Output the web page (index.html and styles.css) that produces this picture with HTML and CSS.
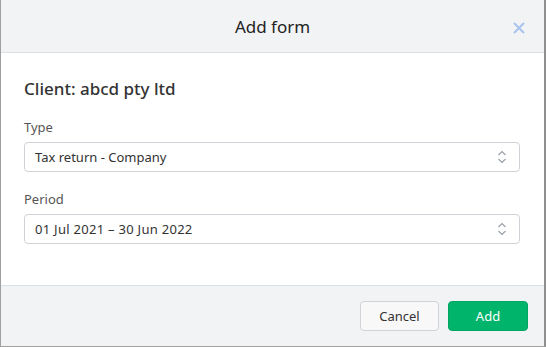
FILE: index.html
```html
<!DOCTYPE html>
<html>
<head>
<meta charset="utf-8">
<link rel="stylesheet" href="styles.css">
</head>
<body>
<div class="dialog">
  <div class="header">
    <div class="title">Add form</div>
    <div class="close">
      <svg width="14" height="14" viewBox="0 0 14 14"><path d="M2 2 L12 12 M12 2 L2 12" stroke="#a8c4ee" stroke-width="2" fill="none"/></svg>
    </div>
  </div>
  <div class="body">
    <div class="client">Client: abcd pty ltd</div>
    <div class="field">
      <div class="label">Type</div>
      <div class="select">
        <span>Tax return - Company</span>
        <svg class="chev" width="10" height="14" viewBox="0 0 10 14"><path d="M1.5 5 L5 1.5 L8.5 5 M1.5 9 L5 12.5 L8.5 9" stroke="#9aa0a8" stroke-width="1.2" fill="none"/></svg>
      </div>
    </div>
    <div class="field">
      <div class="label">Period</div>
      <div class="select">
        <span class="dates">01 Jul 2021 – 30 Jun 2022</span>
        <svg class="chev" width="10" height="14" viewBox="0 0 10 14"><path d="M1.5 5 L5 1.5 L8.5 5 M1.5 9 L5 12.5 L8.5 9" stroke="#9aa0a8" stroke-width="1.2" fill="none"/></svg>
      </div>
    </div>
  </div>
  <div class="footer">
    <button class="btn cancel">Cancel</button>
    <button class="btn add">Add</button>
  </div>
</div>
</body>
</html>
```
FILE: styles.css
```css
html, body { margin: 0; padding: 0; background: #fff; }
body { font-family: "Noto Sans", "Open Sans", sans-serif; color: #333; }
.dialog {
  width: 543px;
  height: 346px;
  border-left: 1px solid #a0a0a0;
  border-right: 2px solid #8f8f8f;
  border-bottom: 1px solid #a0a0a0;
  display: flex;
  flex-direction: column;
  background: #fff;
}
.header {
  height: 52px;
  background: #f2f3f5;
  border-bottom: 1px solid #dcdfe4;
  display: flex;
  align-items: center;
  justify-content: center;
  position: relative;
}
.title { font-size: 17px; color: #222; }
.close { position: absolute; right: 18px; top: 18px; width: 14px; height: 14px; }
.body {
  flex: 1;
  padding: 24px 24px 0 23px;
}
.client { font-size: 17px; font-weight: 500; color: #333; margin-bottom: 18px; }
.field { margin-bottom: 18px; }
.label { font-size: 13px; color: #555; margin-bottom: 6px; }
.select {
  height: 28px;
  border: 1px solid #cfd2d6;
  border-radius: 4px;
  display: flex;
  align-items: center;
  justify-content: space-between;
  padding: 0 12px 0 10px;
  font-size: 13px;
  color: #333;
}
.dates { letter-spacing: 0.28px; }
.chev { display: block; }
.footer {
  height: 60px;
  background: #f2f3f5;
  border-top: 1px solid #dcdfe4;
  display: flex;
  align-items: center;
  justify-content: flex-end;
  gap: 9px;
  padding-right: 16px;
}
.btn {
  height: 30px;
  border-radius: 4px;
  font-family: inherit;
  font-size: 13px;
  padding: 0;
  width: 80px;
}
.cancel { background: #f8f8f8; border: 1px solid #cfd2d6; color: #333; width: 79px; }
.add { background: #00b46c; border: 1px solid #00a563; color: #fff; }
```
